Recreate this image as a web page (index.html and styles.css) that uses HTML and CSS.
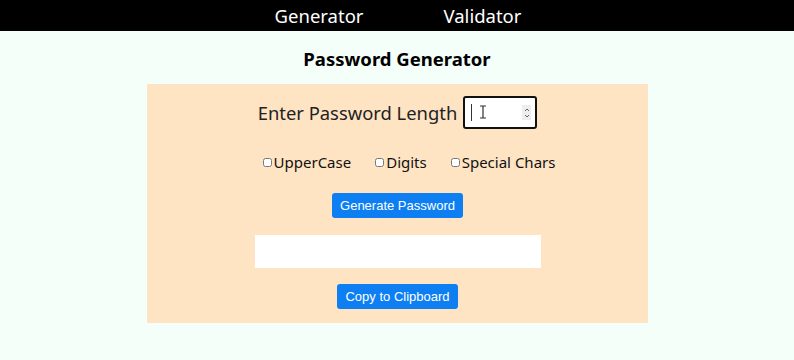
FILE: index.html
```html
<!DOCTYPE html>
<html lang="en">
<head>
    <meta charset="UTF-8">
    <meta name="viewport" content="width=device-width, initial-scale=1.0">
    <title>Password Generator</title>
    <link rel="stylesheet" href="styles.css">
</head>
<body>
    <nav class="navbar">
        <a href="#" class="nav-link">Generator</a>
        <a href="#" class="nav-link">Validator</a>
    </nav>

    <h1 class="title">Password Generator</h1>

    <div class="generator">
        <div class="length-row">
            <label for="length">Enter Password Length</label>
            <div class="length-box">
                <input type="number" id="length" class="length-input" min="4" max="32">
                <span class="caret"></span>
                <svg class="ibeam" width="8" height="14" viewBox="0 0 8 14">
                    <path d="M1 1h6M4 1v12M1 13h6" stroke="#333" stroke-width="1.2" fill="none"/>
                </svg>
                <span class="spin">
                    <svg width="6" height="12" viewBox="0 0 6 12">
                        <path d="M1 4l2-2 2 2M1 8l2 2 2-2" stroke="#666" stroke-width="1" fill="none"/>
                    </svg>
                </span>
            </div>
        </div>

        <div class="options">
            <label class="option"><input type="checkbox" id="upper">UpperCase</label>
            <label class="option"><input type="checkbox" id="digits">Digits</label>
            <label class="option"><input type="checkbox" id="special">Special Chars</label>
        </div>

        <button class="btn btn-generate" onclick="generatePassword()">Generate Password</button>

        <div class="output" id="output"></div>

        <button class="btn" onclick="copyPassword()">Copy to Clipboard</button>
    </div>

    <script>
        function generatePassword() {
            let length = parseInt(document.getElementById('length').value) || 8;
            let chars = 'abcdefghijklmnopqrstuvwxyz';
            if (document.getElementById('upper').checked) chars += 'ABCDEFGHIJKLMNOPQRSTUVWXYZ';
            if (document.getElementById('digits').checked) chars += '0123456789';
            if (document.getElementById('special').checked) chars += '!@#$%^&*()_+-=';
            let password = '';
            for (let i = 0; i < length; i++) {
                password += chars[Math.floor(Math.random() * chars.length)];
            }
            document.getElementById('output').textContent = password;
        }

        function copyPassword() {
            const text = document.getElementById('output').textContent;
            if (text) navigator.clipboard.writeText(text);
        }
    </script>
</body>
</html>
```

FILE: styles.css
```css
body {
    font-family: 'Noto Sans', 'Open Sans', sans-serif;
    background-color: #f5fffa;
    margin: 0;
    padding: 0;
}

.navbar {
    background-color: #000;
    height: 31px;
    display: flex;
    justify-content: center;
    align-items: center;
    gap: 80px;
    padding-left: 2px;
}

.nav-link {
    color: #fff;
    text-decoration: none;
    font-size: 18.5px;
    line-height: 31px;
}

.title {
    text-align: center;
    font-size: 18.5px;
    font-weight: bold;
    margin: 15px 0 12px;
    line-height: 26px;
}

.generator {
    width: 501px;
    height: 239px;
    margin-left: 147px;
    background-color: #ffe4c4;
    display: flex;
    flex-direction: column;
    align-items: center;
    box-sizing: border-box;
    padding-top: 12px;
}

.length-row {
    display: flex;
    align-items: center;
    gap: 6px;
    font-size: 18.4px;
    color: #222;
}

.length-box {
    position: relative;
    width: 74px;
    height: 33px;
}

.length-input {
    width: 100%;
    height: 100%;
    box-sizing: border-box;
    border: 2px solid #111;
    border-radius: 3px;
    background: #fff;
    font-size: 16px;
    padding: 0 6px;
    -moz-appearance: textfield;
}

.length-input::-webkit-inner-spin-button,
.length-input::-webkit-outer-spin-button {
    -webkit-appearance: none;
    margin: 0;
}

.caret {
    position: absolute;
    left: 8px;
    top: 8px;
    width: 1px;
    height: 17px;
    background: #333;
}

.ibeam {
    position: absolute;
    left: 16px;
    top: 9px;
}

.spin {
    position: absolute;
    right: 6px;
    top: 9px;
    width: 9px;
    height: 15px;
    background: #eee;
    display: flex;
    justify-content: center;
    align-items: center;
}

.options {
    display: flex;
    gap: 24px;
    margin-top: 23px;
    font-size: 15px;
    color: #111;
    margin-left: 23px;
}

.option {
    display: flex;
    align-items: center;
}

.option input {
    width: 9px;
    height: 9px;
    margin: 0 2px 0 0;
}

.btn {
    background-color: #0d7ff2;
    color: #fff;
    border: none;
    border-radius: 3px;
    font-family: 'Liberation Sans', Arial, sans-serif;
    font-size: 13px;
    height: 25px;
    padding: 0 8px;
    cursor: pointer;
}

.btn-generate {
    margin-top: 21px;
}

.output {
    width: 286px;
    height: 33px;
    background: #fff;
    margin: 17px 0 16px;
    font-size: 16px;
    line-height: 33px;
    text-align: center;
}
```
